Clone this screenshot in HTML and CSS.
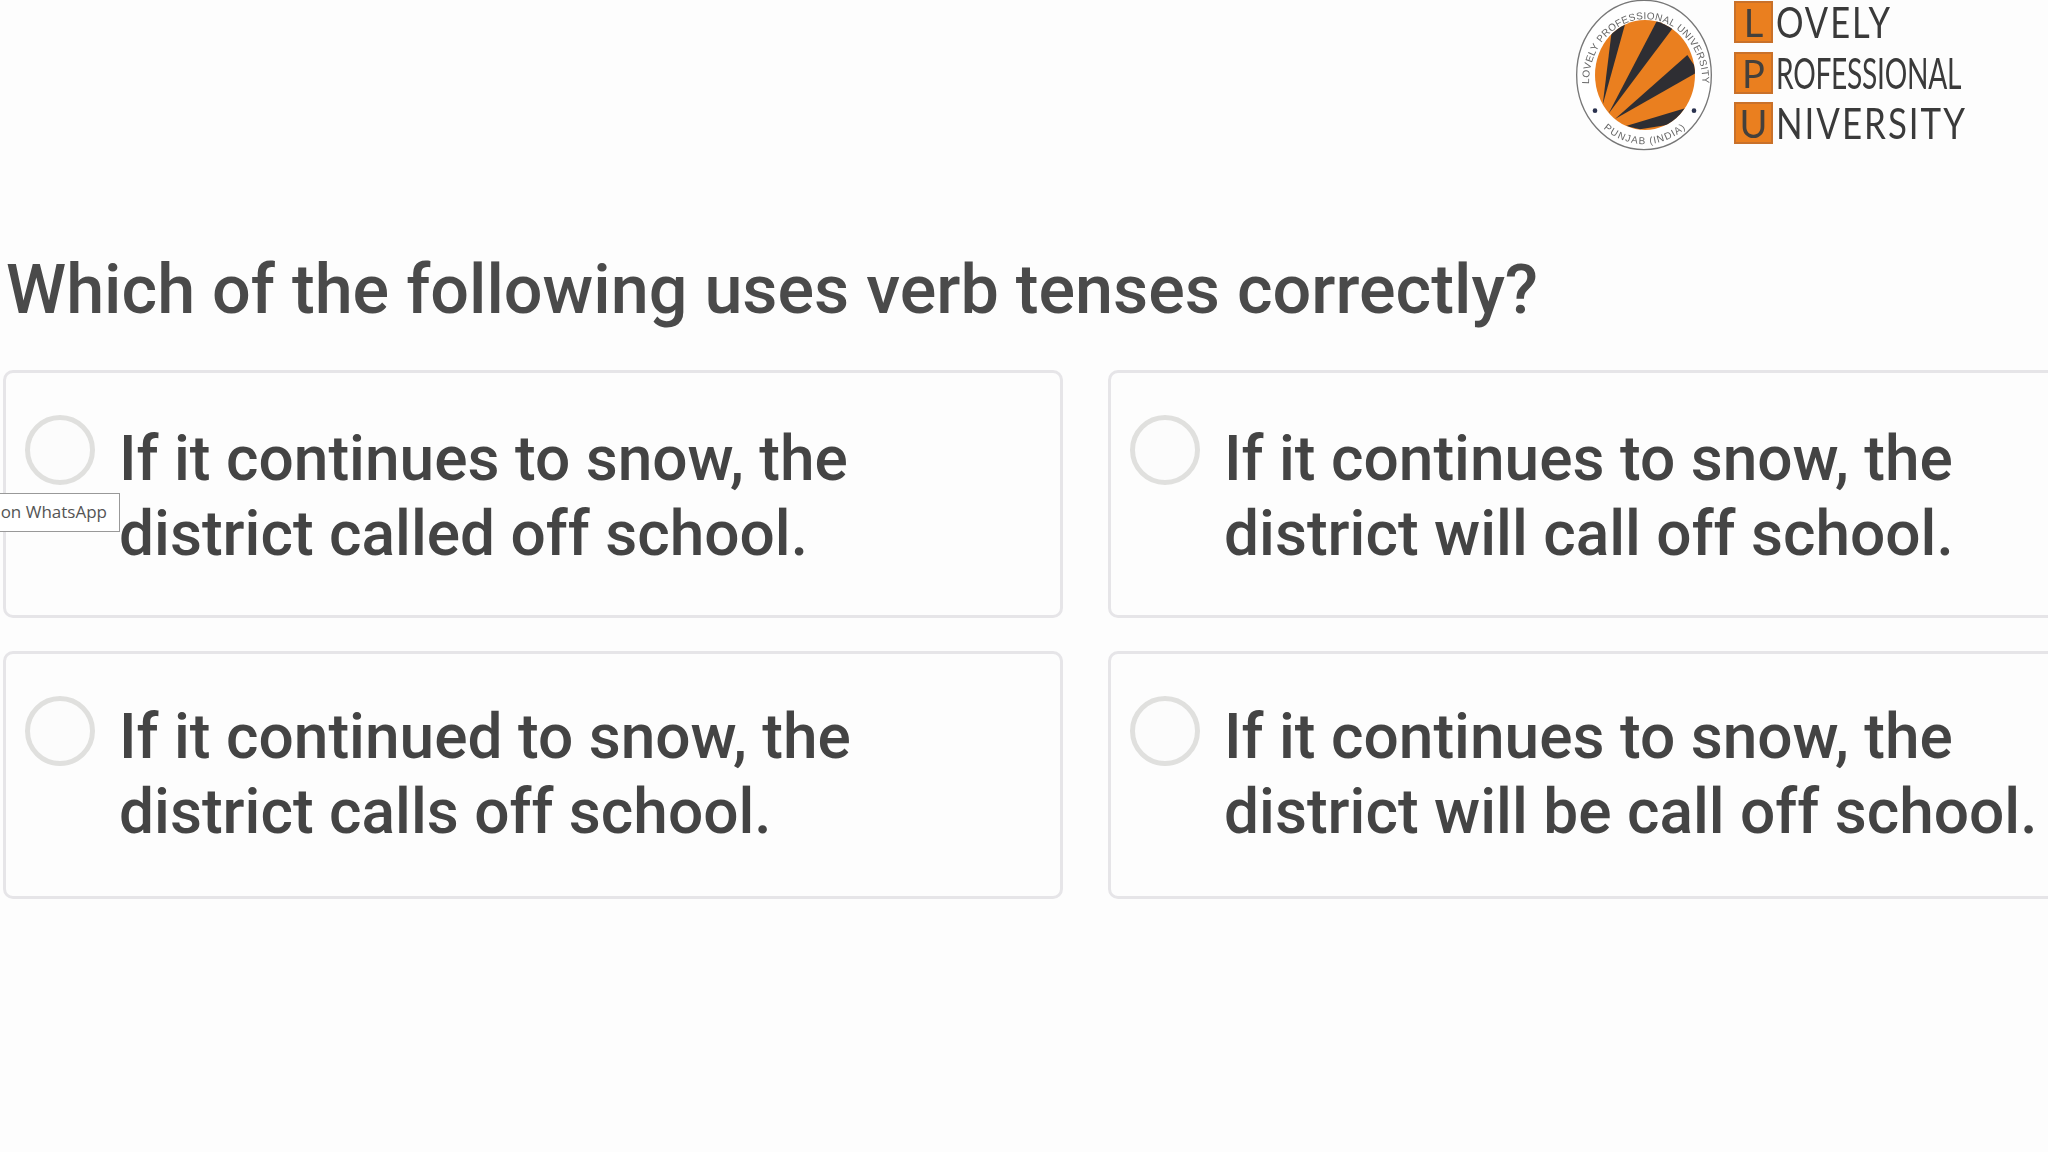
FILE: index.html
```
<!DOCTYPE html>
<html lang="en">
<head>
<meta charset="utf-8">
<title>Verb tenses question</title>
<link rel="stylesheet" href="styles.css">
</head>
<body>
<div class="page">
  <header class="brand">
    <svg class="seal" viewBox="0 0 480 465" aria-hidden="true">
      <defs>
        <clipPath id="disk"><ellipse cx="225" cy="225" rx="150" ry="165"/></clipPath>
        <path id="arcTop" d="M58 268 A170 190 0 1 1 396 268"/>
        <path id="arcBottom" d="M92 345 A172 185 0 0 0 355 345"/>
      </defs>
      <ellipse class="ring" cx="222" cy="225" rx="202" ry="224"/>
      <ellipse class="disk" cx="225" cy="225" rx="150" ry="165"/>
      <g clip-path="url(#disk)" class="beams">
        <polygon points="98,315 128,70 166,70"/>
        <polygon points="115,342 262,60 308,85"/>
        <polygon points="135,357 352,165 385,215"/>
        <polygon points="168,378 345,325 310,372 210,388"/>
      </g>
      <circle class="dot" cx="75" cy="332" r="7"/>
      <circle class="dot" cx="372" cy="332" r="7"/>
      <text class="seal-text"><textPath href="#arcTop" startOffset="50%" text-anchor="middle">LOVELY  PROFESSIONAL  UNIVERSITY</textPath></text>
      <text class="seal-text"><textPath href="#arcBottom" startOffset="50%" text-anchor="middle" dominant-baseline="hanging">PUNJAB (INDIA)</textPath></text>
    </svg>
    <div class="wordmark">
      <div class="word"><span class="initial">L</span><span class="rest rest-lovely">OVELY</span></div>
      <div class="word"><span class="initial">P</span><span class="rest rest-professional">ROFESSIONAL</span></div>
      <div class="word"><span class="initial">U</span><span class="rest rest-university">NIVERSITY</span></div>
    </div>
  </header>

  <h1 class="question">Which of the following uses verb tenses correctly?</h1>

  <div class="options">
    <label class="option">
      <span class="radio"></span>
      <span class="option-text">If it continues to snow, the<br>district called off school.</span>
      <span class="tooltip">on WhatsApp</span>
    </label>
    <label class="option">
      <span class="radio"></span>
      <span class="option-text">If it continues to snow, the<br>district will call off school.</span>
    </label>
    <label class="option">
      <span class="radio"></span>
      <span class="option-text">If it continued to snow, the<br>district calls off school.</span>
    </label>
    <label class="option">
      <span class="radio"></span>
      <span class="option-text">If it continues to snow, the<br>district will be call off school.</span>
    </label>
  </div>
</div>
</body>
</html>
```
FILE: styles.css
```
* { box-sizing: border-box; }
html, body { margin: 0; height: 100%; }
body {
  background: #fdfdfd;
  color: #444;
  font-family: Roboto, "Liberation Sans", sans-serif;
  overflow: hidden;
}
.page { width: 2048px; height: 1152px; overflow: hidden; }

.brand {
  display: flex;
  gap: 4px;
  height: 155px;
  padding-left: 1570px;
}
.seal { width: 160px; height: 155px; flex: none; filter: blur(.4px); }
.ring { fill: #fff; stroke: #777; stroke-width: 4; }
.disk { fill: #ea7f1f; }
.beams polygon { fill: #2e2e33; }
.dot { fill: #2b3350; }
.seal-text { font-family: "Liberation Sans", sans-serif; font-size: 30px; fill: #666; letter-spacing: 1px; }

.wordmark {
  display: flex;
  flex-direction: column;
  gap: 8.5px;
  padding-top: 1px;
  width: 300px;
  flex: none;
  filter: blur(.3px);
}
.word {
  display: flex;
  align-items: center;
  gap: 3px;
  height: 42px;
  font-family: Lato, "Open Sans", sans-serif;
  font-size: 42px;
  font-weight: 400;
  line-height: 42px;
  color: #3a3a3a;
}
.rest { display: block; transform-origin: left center; white-space: nowrap; }
.rest-lovely { transform: scaleX(.82); letter-spacing: 2.4px; }
.rest-professional { transform: scaleX(.67); letter-spacing: -.4px; }
.rest-university { transform: scaleX(.83); letter-spacing: 2.4px; }
.initial {
  display: flex;
  align-items: center;
  justify-content: center;
  flex: none;
  width: 39px;
  height: 42px;
  background: #ea7f1f;
  border: 2px solid #c9712a;
  font-size: 38px;
  color: #44403c;
}

.question {
  margin: 98px 0 0 6px;
  height: 117px;
  font-size: 68.3px;
  font-weight: 500;
  line-height: 75px;
  color: #4a4a4a;
}

.options {
  display: grid;
  grid-template-columns: 1060px 1060px;
  grid-auto-rows: 248px;
  gap: 33px 45px;
  padding-left: 3px;
}
.option {
  position: relative;
  display: flex;
  align-items: flex-start;
  gap: 24px;
  padding: 42px 0 0 19px;
  background: #fdfdfd;
  border: 3px solid #e6e5e8;
  border-radius: 10px;
}
.radio {
  flex: none;
  width: 70px;
  height: 70px;
  background: #fcfcfc;
  border: 5px solid #e0e0de;
  border-radius: 50%;
}
.option-text {
  margin-top: 4px;
  font-size: 62.2px;
  font-weight: 500;
  line-height: 74.5px;
  color: #444;
  white-space: nowrap;
}
.option:nth-child(-n+2) .option-text { margin-top: 7px; }
.tooltip {
  position: absolute;
  left: -6px;
  top: 120px;
  width: 120px;
  height: 39px;
  padding-right: 12px;
  text-align: right;
  font-family: "Open Sans", sans-serif;
  font-size: 17px;
  line-height: 36px;
  color: #555;
  background: #fff;
  border: 1px solid #999;
  border-left: 0;
  white-space: nowrap;
}
```
